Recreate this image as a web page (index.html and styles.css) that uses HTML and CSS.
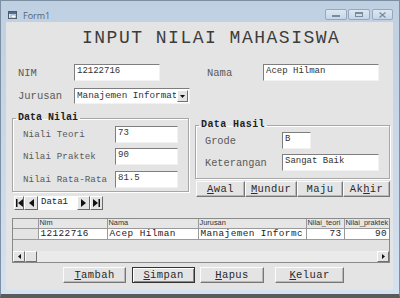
FILE: index.html
```html
<!DOCTYPE html>
<html>
<head>
	<title>Form1</title>
	<link rel="stylesheet" href="styles.css">
</head>
<body>
	<div class="window">
		<div class="titlebar">
			<div class="caption">
				<svg class="app-icon" width="9" height="8" viewBox="0 0 9 8">
					<rect x="0.5" y="0.5" width="8" height="7" fill="#dfe6ee" stroke="#4b5a6b"/>
					<rect x="1" y="1" width="7" height="2" fill="#4b6f9c"/>
					<rect x="3" y="4" width="5" height="3" fill="#fff" stroke="#6a7a8a" stroke-width="0.6"/>
				</svg>
				<span>Form1</span>
			</div>
			<div class="winbtns">
				<span class="winbtn"><i class="ico-min"></i></span>
				<span class="winbtn"><i class="ico-max"></i></span>
				<span class="winbtn close">
					<svg width="7" height="6" viewBox="0 0 7 6"><path d="M0.5 0.5 L6.5 5.5 M6.5 0.5 L0.5 5.5" stroke="#7a8a9c" stroke-width="1.3"/></svg>
				</span>
			</div>
		</div>
		<div class="client">
			<h1>INPUT NILAI MAHASISWA</h1>
			<div class="row row-top">
				<label class="lbl">NIM</label>
				<input class="field w-nim" type="text" value="12122716">
				<label class="lbl lbl-nama">Nama</label>
				<input class="field w-nama" type="text" value="Acep Hilman">
			</div>
			<div class="row row-jur">
				<label class="lbl">Jurusan</label>
				<div class="combo">
					<span class="combo-text">Manajemen Informat</span>
					<span class="drop"><svg width="5" height="3" viewBox="0 0 5 3"><path d="M0 0 H5 L2.5 3 Z" fill="#111"/></svg></span>
				</div>
			</div>
			<div class="middle">
				<div class="col-left">
					<fieldset class="group">
						<legend>Data Nilai</legend>
						<div class="nrow"><span class="nlbl">Niali Teori</span><input class="field w-num" type="text" value="73"></div>
						<div class="nrow"><span class="nlbl">Nilai Praktek</span><input class="field w-num" type="text" value="90"></div>
						<div class="nrow"><span class="nlbl">Nilai Rata-Rata</span><input class="field w-num" type="text" value="81.5"></div>
					</fieldset>
					<div class="datactl">
						<span class="dbtn d-first"><svg width="7" height="8" viewBox="0 0 7 8"><rect x="0" y="0" width="1.5" height="8" fill="#111"/><path d="M7 0 V8 L2 4 Z" fill="#111"/></svg></span>
						<span class="dbtn d-prev"><svg width="5" height="8" viewBox="0 0 5 8"><path d="M5 0 V8 L0 4 Z" fill="#111"/></svg></span>
						<span class="dcap">Data1</span>
						<span class="dbtn d-next"><svg width="5" height="8" viewBox="0 0 5 8"><path d="M0 0 V8 L5 4 Z" fill="#111"/></svg></span>
						<span class="dbtn d-last"><svg width="7" height="8" viewBox="0 0 7 8"><path d="M0 0 V8 L5 4 Z" fill="#111"/><rect x="5.5" y="0" width="1.5" height="8" fill="#111"/></svg></span>
					</div>
				</div>
				<div class="col-right">
					<fieldset class="group group-hasil">
						<legend>Data Hasil</legend>
						<div class="hrow"><span class="hlbl">Grode</span><input class="field w-grade" type="text" value="B"></div>
						<div class="hrow"><span class="hlbl">Keterangan</span><input class="field w-ket" type="text" value="Sangat Baik"></div>
					</fieldset>
					<div class="navbtns">
						<button class="btn w-awal"><u>A</u>wal</button>
						<button class="btn w-mundur"><u>M</u>undur</button>
						<button class="btn w-maju">Maju</button>
						<button class="btn w-akhir">Ak<u>h</u>ir</button>
					</div>
				</div>
			</div>
			<div class="grid">
				<table>
					<colgroup>
						<col style="width:25px">
						<col style="width:69px">
						<col style="width:91px">
						<col style="width:108px">
						<col style="width:38px">
						<col style="width:45px">
					</colgroup>
					<tr class="ghead">
						<td class="sel"></td>
						<td>Nim</td>
						<td>Nama</td>
						<td>Jurusan</td>
						<td>Nilai_teori</td>
						<td>Nilai_praktek</td>
					</tr>
					<tr class="gdata">
						<td class="sel"></td>
						<td>12122716</td>
						<td>Acep Hilman</td>
						<td>Manajemen Informc</td>
						<td class="num">73</td>
						<td class="num">90</td>
					</tr>
				</table>
				<div class="gspace"></div>
				<div class="hscroll">
					<span class="sarrow"><svg width="3" height="5" viewBox="0 0 3 5"><path d="M3 0 V5 L0 2.5 Z" fill="#111"/></svg></span>
					<span class="sthumb"></span>
					<span class="strack"></span>
					<span class="sarrow"><svg width="3" height="5" viewBox="0 0 3 5"><path d="M0 0 V5 L3 2.5 Z" fill="#111"/></svg></span>
				</div>
			</div>
			<div class="actions">
				<button class="btn w-tambah"><u>T</u>ambah</button>
				<button class="btn w-simpan focus"><u>S</u>impan</button>
				<button class="btn w-hapus"><u>H</u>apus</button>
				<button class="btn w-keluar"><u>K</u>eluar</button>
			</div>
		</div>
	</div>
</body>
</html>
```

FILE: styles.css
```css
* {
	box-sizing: border-box;
}
body {
	margin: 0;
	background: #4e4e4e;
	font-family: "Liberation Mono", monospace;
}
.window {
	width: 400px;
	height: 298px;
	background: linear-gradient(#bfd0e3, #d3e1f0);
	border: 1px solid #7d8fa3;
	border-bottom: 4px solid #5a5a5a;
	display: flex;
	flex-direction: column;
}

/* title bar */
.titlebar {
	height: 21px;
	display: flex;
	justify-content: space-between;
	padding: 0 6px 0 7px;
}
.caption {
	display: flex;
	align-items: center;
	gap: 6px;
	padding-top: 7px;
	font-family: "Open Sans", sans-serif;
	font-size: 9px;
	color: #56626f;
}
.winbtns {
	display: flex;
	padding-top: 8px;
	gap: 1px;
}
.winbtn {
	width: 22px;
	height: 11px;
	border: 1px solid #97a8bb;
	border-radius: 2px;
	background: linear-gradient(#dde7f2, #c6d5e6);
	display: flex;
	align-items: center;
	justify-content: center;
}
.winbtn.close {
	width: 21px;
	margin-left: 1px;
}
.ico-min {
	width: 8px;
	height: 2px;
	margin-top: 3px;
	background: #7a8a9c;
}
.ico-max {
	width: 8px;
	height: 5px;
	border: 1px solid #7a8a9c;
	border-top-width: 2px;
}

/* client area */
.client {
	margin: 0 6px 0 5px;
	height: 268px;
	background: #e4e4e4;
}
h1 {
	margin: 7px 0 0 76px;
	font: normal 18px/18px "Liberation Mono", monospace;
	letter-spacing: 1.5px;
	color: #3c3c3c;
}
.row {
	display: flex;
	align-items: center;
}
.row-top {
	margin-top: 17px;
	height: 17px;
}
.row-jur {
	margin-top: 7px;
	height: 16px;
}
.lbl {
	width: 56px;
	margin-left: 12px;
	font-size: 10.5px;
	color: #5a5a5a;
}
.lbl-nama {
	margin-left: 47px;
}
.field {
	height: 17px;
	margin: 0;
	padding: 1px 2px 5px;
	border: 1px solid;
	border-color: #7e7e7e #f2f2f2 #f2f2f2 #7e7e7e;
	background: #fff;
	font: 9px/9px "Liberation Mono", monospace;
	color: #333;
	outline: none;
}
.w-nim { width: 86px; }
.w-nama { width: 116px; }
.w-num { width: 63px; }
.w-grade { width: 29px; }
.w-ket { width: 97px; }

.combo {
	width: 116px;
	height: 16px;
	display: flex;
	border: 1px solid;
	border-color: #7e7e7e #f2f2f2 #f2f2f2 #7e7e7e;
	background: #fff;
}
.combo-text {
	flex: 1;
	overflow: hidden;
	white-space: nowrap;
	padding: 2px 0 0 2px;
	font-size: 9.3px;
	line-height: 10px;
	color: #333;
}
.drop {
	width: 11px;
	margin: 1px;
	background: #e4e4e4;
	border: 1px solid;
	border-color: #fff #707070 #707070 #fff;
	display: flex;
	align-items: center;
	justify-content: center;
}

/* group boxes */
.middle {
	display: flex;
	margin-top: 8px;
}
.col-left {
	width: 177px;
	margin-left: 6px;
}
.col-right {
	width: 195px;
	margin-left: 6px;
	padding-top: 7px;
}
.group {
	margin: 0;
	padding: 2px 0 3px 0;
	min-width: 0;
	border: 1px solid #a7a7a7;
	box-shadow: inset 1px 1px 0 #fff, 1px 1px 0 #fff;
}
.group legend {
	margin-left: 3px;
	padding: 0 2px;
	font: bold 10px/12px "Liberation Mono", monospace;
	color: #1e1e1e;
}
.group-hasil {
	padding: 1px 0 7px 0;
}
.group-hasil legend {
	letter-spacing: 0.4px;
}
.nrow,
.hrow {
	display: flex;
	align-items: center;
	height: 17px;
	margin-left: 10px;
}
.nrow + .nrow {
	margin-top: 5px;
}
.nrow:last-child {
	margin-top: 6px;
}
.hrow {
	margin-left: 9px;
}
.hrow + .hrow {
	margin-top: 5px;
}
.nlbl {
	width: 92px;
	font-size: 9.2px;
	letter-spacing: 0.1px;
	color: #5a5a5a;
}
.hlbl {
	width: 77px;
	font-size: 10.3px;
	color: #5a5a5a;
}

/* data control */
.datactl {
	display: flex;
	height: 14px;
	width: 89px;
	margin: 4px 0 0 2px;
	background: #fff;
}
.dbtn {
	background: #e4e4e4;
	border: 1px solid;
	border-color: #fff #6a6a6a #6a6a6a #fff;
	display: flex;
	align-items: center;
	justify-content: center;
}
.d-first { width: 10px; }
.d-prev { width: 14px; }
.d-next { width: 13px; }
.d-last { width: 13px; }
.dcap {
	flex: 1;
	padding-left: 3px;
	font-size: 9px;
	line-height: 13px;
	color: #222;
}

/* buttons */
.btn {
	height: 16px;
	margin: 0;
	padding: 0;
	background: #e4e4e4;
	border: 1px solid;
	border-color: #fbfbfb #777 #777 #fbfbfb;
	box-shadow: inset -1px -1px 0 #b8b8b8;
	font: 10.5px/13px "Liberation Mono", monospace;
	letter-spacing: 0.4px;
	color: #2a2a2a;
}
.btn.focus {
	border: 1px solid #333;
	box-shadow: inset 1px 1px 0 #fff, inset -1px -1px 0 #888;
}
.navbtns {
	display: flex;
	margin: 2px 0 0 1px;
}
.w-awal { width: 49px; }
.w-mundur { width: 52px; }
.w-maju { width: 46px; }
.w-akhir { width: 47px; }

/* grid */
.grid {
	width: 378px;
	height: 45px;
	margin: 8px 0 0 6px;
	border: 1px solid #8a8a8a;
	display: flex;
	flex-direction: column;
	background: #e2e2e2;
}
.grid table {
	width: 376px;
	table-layout: fixed;
	border-collapse: collapse;
}
.grid td {
	padding: 0 1px;
	border: 1px solid #9a9a9a;
	border-top: none;
	white-space: nowrap;
	overflow: hidden;
}
.grid td:first-child {
	border-left: none;
}
.grid td:last-child {
	border-right: none;
}
.ghead td {
	height: 9px;
	font: 7.4px/8px "Liberation Sans", sans-serif;
	color: #333;
	background: #e6e6e6;
}
.gdata td {
	height: 11px;
	padding: 0 2px;
	font-size: 9.4px;
	line-height: 10px;
	letter-spacing: 0.4px;
	color: #222;
	background: #fff;
}
.grid td.sel {
	background: #e4e4e4;
}
.gdata td.num {
	text-align: right;
}
.gspace {
	flex: 1;
}
.hscroll {
	display: flex;
	height: 11px;
	background: #eaeaea;
}
.sarrow {
	width: 12px;
	background: #e4e4e4;
	border: 1px solid;
	border-color: #fff #707070 #707070 #fff;
	display: flex;
	align-items: center;
	justify-content: center;
}
.sthumb {
	width: 12px;
	background: #e4e4e4;
	border: 1px solid;
	border-color: #fff #707070 #707070 #fff;
}
.strack {
	flex: 1;
}

/* bottom actions */
.actions {
	display: flex;
	gap: 5px;
	margin: 4px 0 0 57px;
}
.w-tambah { width: 63px; margin-right: 1px; }
.w-simpan { width: 63px; }
.w-hapus { width: 64px; }
.w-keluar { width: 69px; margin-left: 6px; }
```
